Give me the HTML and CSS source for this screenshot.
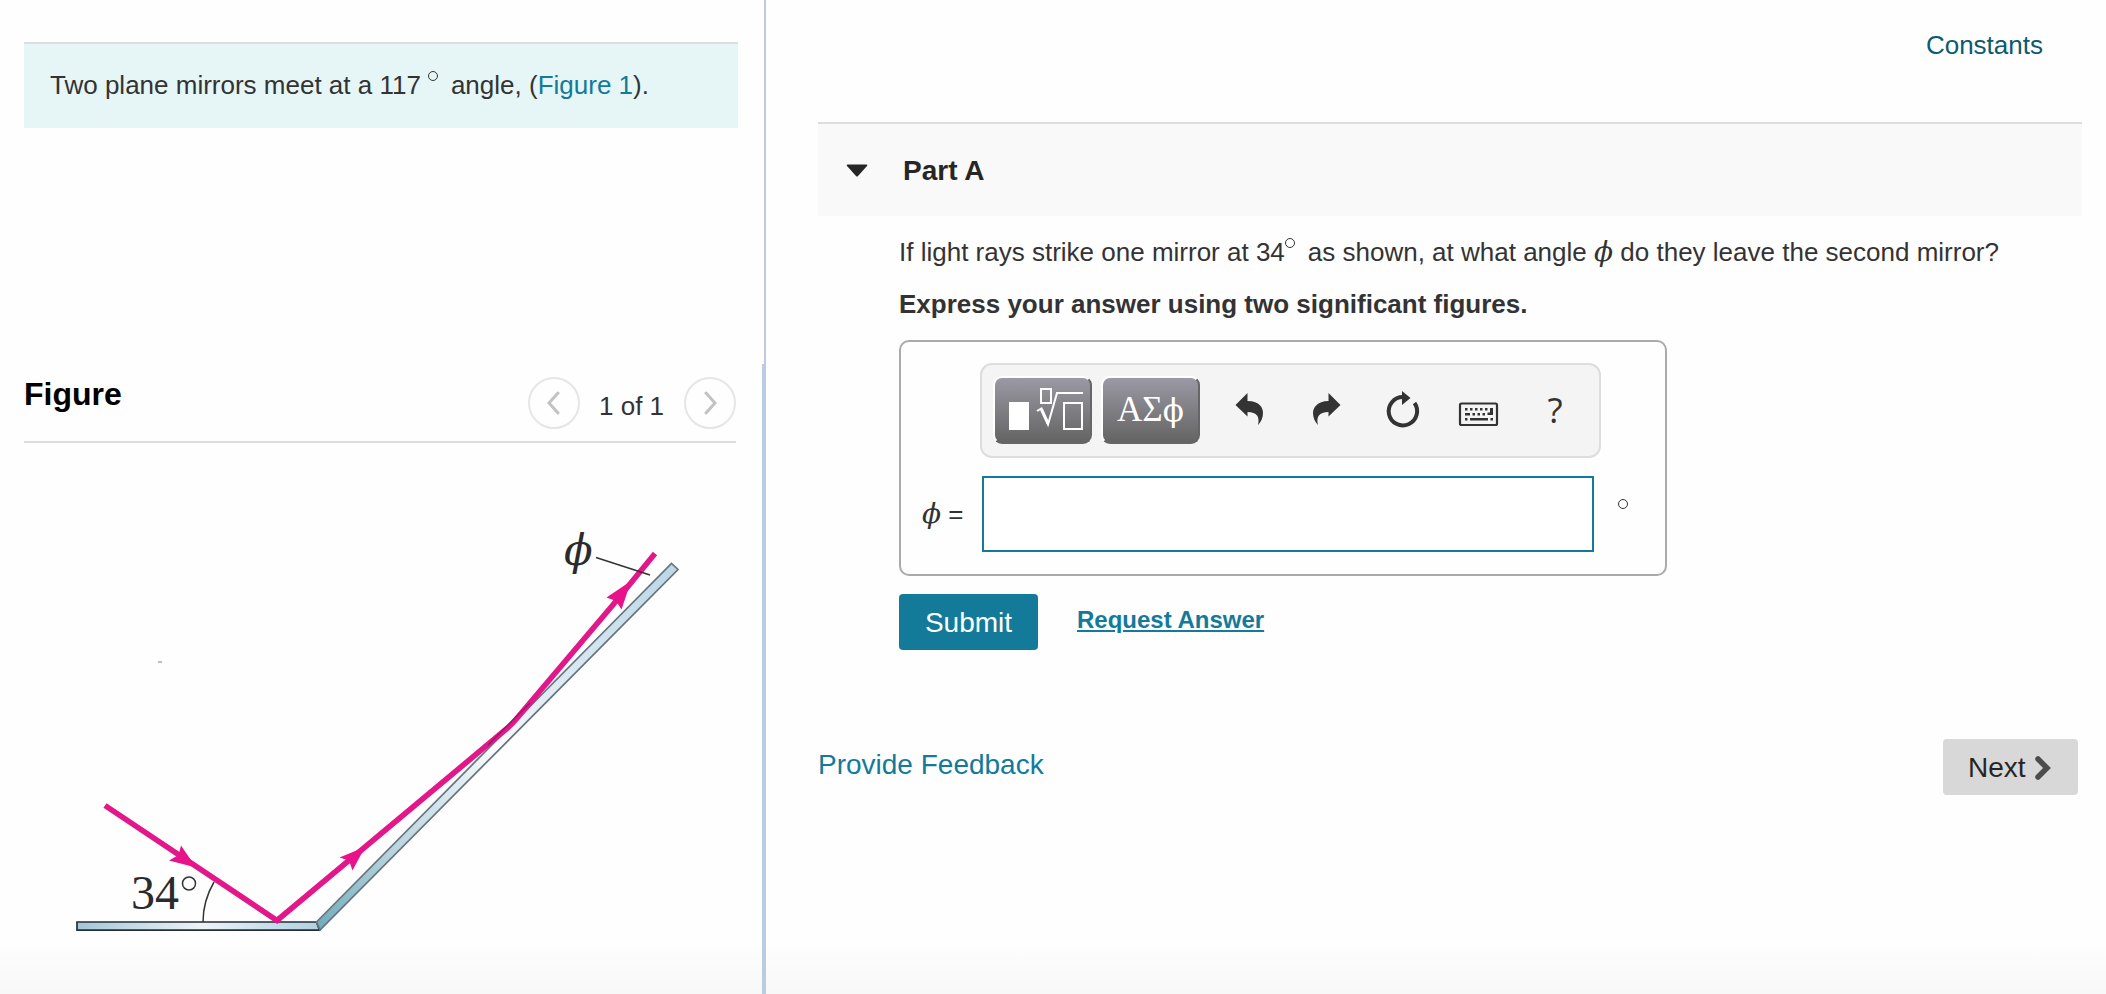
FILE: index.html
```
<!DOCTYPE html>
<html lang="en">
<head>
<meta charset="utf-8">
<title>Part A</title>
<link rel="stylesheet" href="styles.css">
</head>
<body>
<div class="page">
  <aside class="left">
    <section class="intro">
      <p class="stem">Two plane mirrors meet at a 117<span class="deg deg-intro"></span>angle, (<a href="#">Figure 1</a>).</p>
    </section>
    <section class="figure-panel">
      <header class="figure-head">
        <h2>Figure</h2>
        <div class="pager">
          <button class="round" aria-label="Previous"><svg width="14" height="24" viewBox="1 0 14 24"><path d="M12 2 3 12l9 10"/></svg></button>
          <span>1 of 1</span>
          <button class="round" aria-label="Next figure"><svg width="14" height="24" viewBox="0 0 14 24"><path d="M3 2l9 10-9 10"/></svg></button>
        </div>
      </header>
      <svg class="diagram" width="738" height="551" viewBox="0 443 738 551">
        <defs>
          <linearGradient id="flat" x1="77" x2="320" y1="0" y2="0" gradientUnits="userSpaceOnUse"><stop offset="0" stop-color="#a3c6d6"/><stop offset=".3" stop-color="#cfe1ea"/><stop offset=".52" stop-color="#eef3f6"/><stop offset=".78" stop-color="#c9dfec"/><stop offset="1" stop-color="#b2d1df"/></linearGradient>
          <linearGradient id="slope" x1="318" y1="926" x2="675" y2="566" gradientUnits="userSpaceOnUse"><stop offset="0" stop-color="#6faebd"/><stop offset=".2" stop-color="#b7d3dc"/><stop offset=".38" stop-color="#dceaf0"/><stop offset=".5" stop-color="#fbfbfb"/><stop offset=".62" stop-color="#e2eef4"/><stop offset="1" stop-color="#bcd7e7"/></linearGradient>
        </defs>
        <path class="speck" d="M158 662h4"/>
        <path class="mirror" fill="url(#flat)" d="M77 922h239.500l3 8.200H77z"/>
        <path class="mirror slope" fill="url(#slope)" d="M316.500 922 671.500 563.500l6.500 6L320 930z"/>
        <path class="ray" d="M105 805.500 277 920.500 L507 728.500 Q513 723 518 717 L612 606 655 553.500"/>
        <path class="head" d="M196 867.500 169 860.500 178.500 855 181 845.500z"/>
        <path class="head" d="M365 847 339.500 857.500 349 860.500 352.500 870.500z"/>
        <path class="head" d="M631 581 606.500 597.500 616 601 621.500 609.500z"/>
        <path class="touch" d="M488 745 530 703"/>
        <path class="thin" d="M214 882Q203 901 203 922"/>
        <path class="thin" d="M596 557.500 650 575"/>
        <text class="num" x="131" y="909">34</text>
        <circle class="thin" cx="189" cy="883.500" r="6.500"/>
        <text class="fig-phi" x="564" y="564.500">ϕ</text>
      </svg>
    </section>
  </aside>
  <main class="right">
    <div class="top"><a class="constants" href="#">Constants</a></div>
    <header class="part-head">
      <svg width="22" height="13" viewBox="0 0 22 13"><path d="M1.500.5h19q1.500 0 .5 1.500l-9 10q-1 1-2 0L1 2Q0 .5 1.500.5z" fill="#262626"/></svg>
      <h2>Part A</h2>
    </header>
    <section class="body">
      <p class="question">If light rays strike one mirror at 34<span class="deg deg-q"></span>as shown, at what angle <i class="phi">ϕ</i> do they leave the second mirror?</p>
      <p class="instruction">Express your answer using two significant figures.</p>
      <div class="answer">
        <div class="toolbar">
          <button class="key" aria-label="Templates"><svg width="95" height="64" viewBox="0 0 95 64"><path fill="#fff" d="M14 24h20v28H14z"/><g fill="none" stroke="#fff" stroke-width="2"><path d="M46 11h10v14H46zM69 25h18v26H69z"/><path d="M42 33l4.500-2.500 6.500 16L62 15h26"/><path stroke-width="3" d="M46.500 31.500l6.500 14"/></g></svg></button>
          <button class="key greek">ΑΣ<span>ϕ</span></button>
          <div class="tools">
            <svg class="tool" width="76" height="66" viewBox="0 0 76 66"><path d="M34.500 16v8C47 24 50 31 50 36c0 5-2 9-5 12 2-8-1-13-10.500-13v4.500L22.500 28z"/></svg>
            <svg class="tool" width="76" height="66" viewBox="0 0 76 66"><path d="M39.500 16v8C28 24 24 31 24 36c0 5 2 9 5 12-2-8 1-13 10.500-13v4.500l12-11.500z"/></svg>
            <svg class="tool" width="76" height="66" viewBox="0 0 76 66"><path fill="none" stroke="#333" stroke-width="4" d="M38 20A14.200 14.200 0 1 0 49.500 26"/><path d="M37 14l8.500 7-8.500 7z"/></svg>
            <svg class="tool" width="76" height="66" viewBox="0 0 76 66"><rect x="19" y="26.500" width="37" height="21.500" rx="1.500" fill="none" stroke="#333" stroke-width="2.200"/><path d="M24 31h2.500v2.500H24zm5 0h2.500v2.500H29zm5 0h2.500v2.500H34zm5 0h2.500v2.500H39zm5 0h2.500v2.500H44zm5 0h3v7h-5.500v-2.500H49zM24 36h5v2.500h-5zm7.500 0H34v2.500h-2.500zm5 0H39v2.500h-2.500zm5 0H44v2.500h-2.500zM24 41h2.500v2.500H24zm5 0h18v2.500H29zm20.500 0H52v2.500h-2.500z"/></svg>
            <span class="help">?</span>
          </div>
        </div>
        <div class="entry">
          <label for="ans"><i class="phi">ϕ</i> =</label>
          <input id="ans" class="field" type="text">
          <span class="deg deg-unit"></span>
        </div>
      </div>
      <div class="actions">
        <button class="submit">Submit</button>
        <a class="request" href="#">Request Answer</a>
      </div>
    </section>
    <footer class="foot">
      <a href="#">Provide Feedback</a>
      <button class="next">Next<svg width="18" height="26" viewBox="0 0 18 26"><path d="M4 4l9 9-9 9" fill="none" stroke="#4c4c4c" stroke-width="5.500" stroke-linecap="round"/></svg></button>
    </footer>
  </main>
</div>
</body>
</html>
```
FILE: styles.css
```
* { box-sizing: border-box; }
body {
  margin: 0;
  font: 26px/30px "Liberation Sans", Arial, sans-serif;
  color: #333;
  background: linear-gradient(#fefefe 0 940px, #f8f8f8 994px);
}
h2, p { margin: 0; }
a { color: #147a9a; text-decoration: none; }
button { font: inherit; margin: 0; padding: 0; }
.page { display: flex; width: 2106px; height: 994px; overflow: hidden; }

.left { width: 766px; height: 994px; display: flex; flex-direction: column; }
.intro { height: 364px; padding: 42px 26px 0 24px; border-right: 2px solid #bccbdf; }
.stem {
  height: 86px;
  padding: 26px 26px 0;
  border-top: 2px solid #dadfdd;
  background: #e6f5f6;
  white-space: nowrap;
}
.deg {
  display: inline-block;
  border: 1.500px solid #333;
  border-radius: 50%;
  width: 10px;
  height: 10px;
}
.deg-intro { margin: 0 13px 0 7px; vertical-align: 13px; }
.deg-q { margin: 0 13px 0 0; vertical-align: 13px; }
.figure-panel { flex: 1; border-right: 4px solid #bccbdf; }
.figure-head {
  display: flex;
  justify-content: space-between;
  width: 712px;
  height: 79px;
  margin-left: 24px;
  border-bottom: 2px solid #ddd;
}
.figure-head h2 { font-size: 32px; line-height: 36px; padding-top: 12px; color: #000; }
.pager { display: flex; gap: 18px; padding-top: 13px; height: 66px; }
.pager span { padding: 14px 0 0 1px; width: 68px; white-space: nowrap; }
.round {
  display: flex;
  align-items: center;
  justify-content: center;
  width: 52px;
  height: 52px;
  border: 2px solid #e6e6e6;
  border-radius: 50%;
  background: none;
}
.round path { fill: none; stroke: #c2c2c2; stroke-width: 3; stroke-linecap: round; }
.diagram { display: block; }
.mirror { stroke: #222e38; stroke-width: 1.700; }
.slope { stroke: #66747e; }
.ray { fill: none; stroke: #e2178a; stroke-width: 5.600; }
.head { fill: #e8128a; }
.touch { stroke: #7c1452; stroke-width: 1.500; opacity: .65; }
.thin { fill: none; stroke: #333; stroke-width: 1.500; }
.speck { stroke: #aaa; stroke-width: 1.500; }
.num { font: 48px "Liberation Serif", serif; fill: #2b2b2b; }
.fig-phi { font: italic 42px "DejaVu Serif", serif; fill: #2b2b2b; }

.right { width: 1340px; padding: 0 24px 0 52px; }
.top { height: 122px; padding: 30px 39px 0 0; text-align: right; }
.constants { color: #0b5a70; }
.part-head {
  display: flex;
  align-items: center;
  gap: 35px;
  height: 94px;
  padding-left: 28px;
  border-top: 2px solid #ddd;
  background: #f9f9f9;
}
.part-head h2 { font-size: 28px; color: #262626; padding-top: 1px; }
.body { padding: 21px 0 0 81px; }
.question, .instruction { height: 30px; white-space: nowrap; }
.instruction { margin-top: 22px; font-weight: bold; }
.phi { font: italic 28px/26px "DejaVu Serif", serif; }
.answer {
  width: 768px;
  height: 236px;
  margin-top: 21px;
  padding: 21px 0 0 21px;
  border: 2px solid #aaa;
  border-radius: 10px;
}
.toolbar {
  display: flex;
  width: 621px;
  height: 95px;
  margin-left: 58px;
  padding: 11px 0 0 11px;
  border: 2px solid #ddd;
  border-radius: 12px;
  background: #f4f4f4;
}
.key {
  width: 99px;
  height: 68px;
  margin-right: 9px;
  border: 2px solid;
  border-color: #fff #666 #666 #fff;
  border-radius: 9px;
  background: linear-gradient(#9b99a4, #646464);
  color: #fff;
}
.key svg { display: block; }
.greek { font: 35px/52px "Liberation Serif", serif; }
.greek span { font: 31px "DejaVu Serif", serif; }
.tools { display: flex; padding: 1px 0 0 4px; }
.tool { display: block; fill: #333; }
.help { width: 76px; padding-top: 17px; text-align: center; font: 35px/32px "Open Sans", sans-serif; }
.entry { display: flex; height: 76px; margin-top: 18px; }
.entry label { width: 60px; padding-top: 23px; white-space: nowrap; }
.field { width: 612px; height: 76px; padding: 0 12px; border: 2px solid #147a9a; background: #fff; font: inherit; }
.deg-unit { margin: 23px 0 0 24px; }
.actions { display: flex; margin-top: 18px; }
.submit { width: 139px; height: 56px; padding-top: 2px; border: 0; border-radius: 4px; background: #147a9a; color: #fff; font-size: 28px; }
.request { margin: 11px 0 0 39px; font-size: 24px; font-weight: bold; text-decoration: underline; text-decoration-thickness: 2px; text-underline-offset: 2px; }
.foot { display: flex; justify-content: space-between; margin-top: 89px; padding-right: 4px; font-size: 28px; }
.foot > a { padding-top: 11px; }
.next {
  display: flex;
  align-items: center;
  gap: 8px;
  width: 135px;
  height: 56px;
  padding: 1px 0 0 25px;
  border: 0;
  border-radius: 4px;
  background: #d8d8d8;
  color: #262626;
}
```
